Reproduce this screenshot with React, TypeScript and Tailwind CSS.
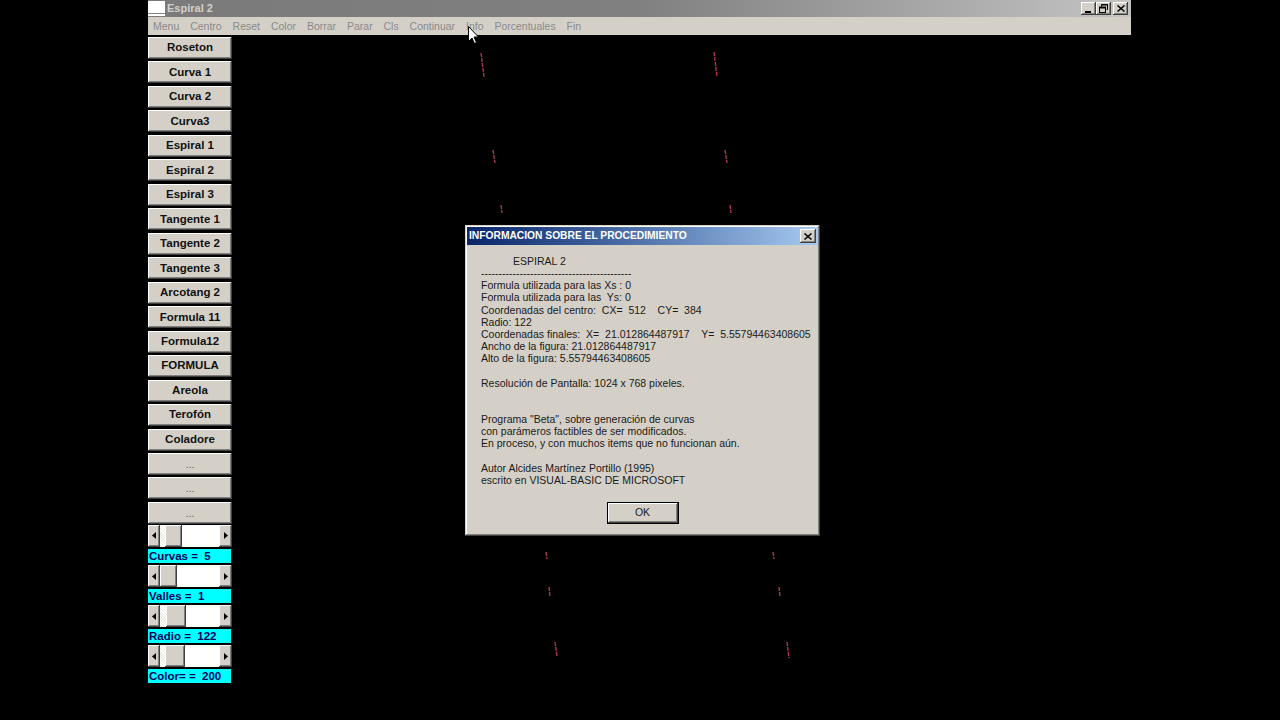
import React from 'react';

const botones = [
  'Roseton', 'Curva 1', 'Curva 2', 'Curva3', 'Espiral 1', 'Espiral 2', 'Espiral 3',
  'Tangente 1', 'Tangente 2', 'Tangente 3', 'Arcotang 2', 'Formula 11', 'Formula12',
  'FORMULA', 'Areola', 'Terofón', 'Coladore', '...', '...', '...',
];

const menu = ['Menu', 'Centro', 'Reset', 'Color', 'Borrar', 'Parar', 'Cls', 'Continuar', 'Info', 'Porcentuales', 'Fin'];

const deslizadores = [
  { label: 'Curvas =  5', thumb: 17, left: 5 },
  { label: 'Valles =  1', thumb: 17, left: 0 },
  { label: 'Radio =  122', thumb: 20, left: 6 },
  { label: 'Color= =  200', thumb: 20, left: 5 },
];

// trazos rojos de la espiral (coordenadas de pantalla)
const trazos = [
  [481, 53, 484, 77], [714, 52, 717, 77],
  [493, 150, 495, 163], [725, 150, 727, 163],
  [501, 205, 502, 213], [730, 205, 731, 213],
  [546, 552, 547, 559], [773, 552, 774, 559],
  [549, 587, 550, 597], [779, 587, 780, 597],
  [555, 642, 557, 657], [787, 642, 789, 658],
];

const lineas = [
  'ESPIRAL 2',
  '-------------------------------------------',
  'Formula utilizada para las Xs : 0',
  'Formula utilizada para las  Ys: 0',
  'Coordenadas del centro:  CX=  512    CY=  384',
  'Radio: 122',
  'Coordenadas finales:  X=  21.012864487917    Y=  5.55794463408605',
  'Ancho de la figura: 21.012864487917',
  'Alto de la figura: 5.55794463408605',
  '',
  'Resolución de Pantalla: 1024 x 768 pixeles.',
  '',
  '',
  'Programa "Beta", sobre generación de curvas',
  'con parámeros factibles de ser modificados.',
  'En proceso, y con muchos items que no funcionan aún.',
  '',
  'Autor Alcides Martínez Portillo (1995)',
  'escrito en VISUAL-BASIC DE MICROSOFT',
];

const raised =
  'bg-[#d4d0c8] shadow-[inset_-1px_-1px_#404040,inset_1px_1px_#ffffff,inset_-2px_-2px_#808080,inset_2px_2px_#d4d0c8]';

function CtrlBtn({ children }: { children: React.ReactNode }) {
  return (
    <div className={`w-[15px] h-[13px] flex items-center justify-center ${raised}`}>
      {children}
    </div>
  );
}

function Deslizador({ thumb, left }: { thumb: number; left: number }) {
  return (
    <div className="h-[22px] flex bg-white">
      <div className={`w-[12px] h-full flex items-center justify-center ${raised}`}>
        <svg width="4" height="7" viewBox="0 0 4 7"><path d="M4 0L0 3.5L4 7Z" fill="#000" /></svg>
      </div>
      <div className="flex-1 flex bg-[repeating-linear-gradient(45deg,#ffffff_0,#ffffff_1px,#ece9e4_1px,#ece9e4_2px)]">
        <div style={{ width: left }} />
        <div className={`h-full ${raised}`} style={{ width: thumb }} />
        <div className="flex-1 bg-white" />
      </div>
      <div className={`w-[13px] h-full flex items-center justify-center ${raised}`}>
        <svg width="4" height="7" viewBox="0 0 4 7"><path d="M0 0L4 3.5L0 7Z" fill="#000" /></svg>
      </div>
    </div>
  );
}

export default function App() {
  return (
    <div className="w-[1280px] h-[720px] bg-black relative overflow-hidden font-['Liberation_Sans',Arial,sans-serif]">
      {/* ventana principal: barra de titulo y menu */}
      <div className="ml-[148px] w-[983px]">
        <div className="h-[17px] flex items-center bg-gradient-to-r from-[#7a7a7a] via-[#808080] to-[#c4c4c4]">
          <div className="w-[17px] h-[15px] bg-white flex flex-col justify-end pb-[2px]">
            <div className="h-[1px] bg-[#808080]" />
          </div>
          <span className="ml-[2px] text-[11px] font-bold text-[#d4d0c8] leading-none">Espiral 2</span>
          <div className="ml-auto flex items-center gap-0 mr-[3px]">
            <CtrlBtn>
              <div className="w-[6px] h-[2px] bg-black mt-[6px] -ml-[1px]" />
            </CtrlBtn>
            <CtrlBtn>
              <svg width="9" height="9" viewBox="0 0 9 9">
                <path d="M2.5 0.5H8.5V5.5H7.5M2.5 0.5V2.5" stroke="#000" fill="none" />
                <rect x="0.5" y="3" width="6" height="5.5" stroke="#000" fill="none" />
                <rect x="0.5" y="3" width="6" height="1.5" fill="#000" />
                <rect x="2.5" y="0.5" width="6" height="1" fill="#000" />
              </svg>
            </CtrlBtn>
            <div className="w-[2px]" />
            <CtrlBtn>
              <svg width="8" height="7" viewBox="0 0 8 7">
                <path d="M0.5 0.5L7.5 6.5M7.5 0.5L0.5 6.5" stroke="#000" strokeWidth="1.5" />
              </svg>
            </CtrlBtn>
          </div>
        </div>
        <div className="h-[18px] bg-[#d4d0c8] flex items-center gap-[10.9px] pl-[5px] pt-[2px] text-[10.5px] text-[#8a8a8a]">
          {menu.map((m) => (
            <span key={m}>{m}</span>
          ))}
        </div>
      </div>

      {/* panel de botones */}
      <div className="ml-[148px] w-[84px] mt-[2px] flex flex-col">
        <div className="flex flex-col gap-[2.47px]">
          {botones.map((b, i) => (
            <div
              key={i}
              className={`h-[22px] flex items-center justify-center ${b === '...' ? 'text-[11px] text-[#606060] font-normal' : 'text-[11.5px] font-bold text-[#111]'} ${raised}`}
            >
              {b}
            </div>
          ))}
        </div>
        <div className="mt-[1px] flex flex-col">
          {deslizadores.map((d, i) => (
            <div key={i} className="flex flex-col mb-[2.2px]">
              <Deslizador thumb={d.thumb} left={d.left} />
              <div className="mt-[2px] h-[14px] bg-[#00ffff] w-[83px] text-[11.5px] font-bold text-[#000060] leading-[14px] whitespace-pre pl-[1px]">
                {d.label}
              </div>
            </div>
          ))}
        </div>
      </div>

      {/* dibujo */}
      <svg className="absolute inset-0 pointer-events-none" width="1280" height="720">
        {trazos.map(([x1, y1, x2, y2], i) => (
          <line key={i} x1={x1} y1={y1} x2={x2} y2={y2} stroke="#b83a55" strokeWidth="1.3" strokeDasharray="4 1" />
        ))}
      </svg>

      {/* dialogo de informacion */}
      <div className="absolute left-[465px] top-[225px] w-[355px] h-[311px] bg-[#d4d0c8] p-[2px] shadow-[inset_-1px_-1px_#404040,inset_1px_1px_#d4d0c8,inset_-2px_-2px_#808080,inset_2px_2px_#ffffff]">
        <div className="h-[18px] bg-gradient-to-r from-[#0a246a] to-[#a6caf0] flex items-center pl-[2px] pr-[2px]">
          <span className="text-[10.25px] font-bold text-white">INFORMACION SOBRE EL PROCEDIMIENTO</span>
          <div className={`ml-auto w-[16px] h-[14px] flex items-center justify-center ${raised}`}>
            <svg width="8" height="7" viewBox="0 0 8 7">
              <path d="M0.5 0.5L7.5 6.5M7.5 0.5L0.5 6.5" stroke="#000" strokeWidth="1.5" />
            </svg>
          </div>
        </div>
        <div className="pl-[14px] pt-[10px] text-[10.5px] leading-[12.17px] text-[#1a1a1a] whitespace-pre">
          {lineas.map((l, i) => (
            <div key={i} className={`h-[12.17px] ${i === 0 ? 'pl-[32px]' : ''}`}>{l}</div>
          ))}
        </div>
        <div className="flex justify-center mt-[16px]">
          <div className="w-[72px] h-[22px] border border-black bg-[#d4d0c8] flex items-center justify-center shadow-[inset_-1px_-1px_#404040,inset_1px_1px_#ffffff,inset_-2px_-2px_#808080] text-[10.5px] text-[#1a1a1a]">
            OK
          </div>
        </div>
      </div>

      {/* cursor */}
      <svg className="absolute left-[468px] top-[26px]" width="12" height="19" viewBox="0 0 12 19">
        <path d="M0.5 0.5V15.5L4 12L6.5 17.5L8.5 16.5L6 11H10.5Z" fill="#fff" stroke="#000" strokeWidth="1" />
      </svg>
    </div>
  );
}
